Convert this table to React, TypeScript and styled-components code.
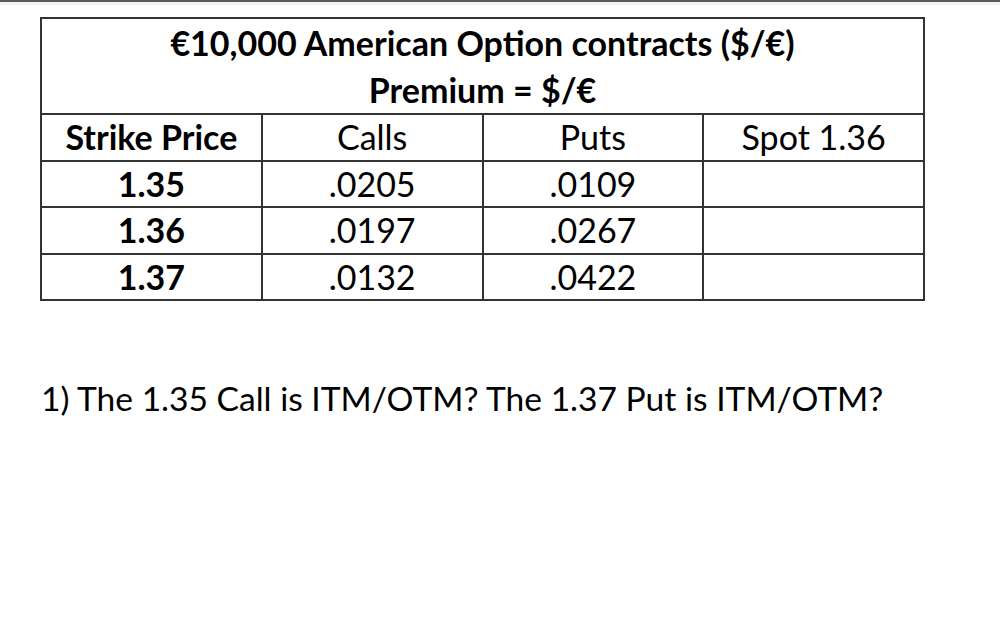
import React from "react";
import styled, { createGlobalStyle } from "styled-components";

const GlobalStyle = createGlobalStyle`
  html, body {
    margin: 0;
    padding: 0;
    background: #ffffff;
  }
  body {
    font-family: Lato, "Open Sans", sans-serif;
    color: #000000;
  }
`;

interface Row {
  strike: string;
  call: string;
  put: string;
}

const rows: Row[] = [
  { strike: "1.35", call: ".0205", put: ".0109" },
  { strike: "1.36", call: ".0197", put: ".0267" },
  { strike: "1.37", call: ".0132", put: ".0422" }
];

export default function App() {
  return (
    <>
      <GlobalStyle />
      <TopEdge />
      <Page>
        <Table>
          <tbody>
            <TitleRow>
              <TitleCell colSpan={4}>
                €10,000 American Option contracts ($/€)
                <br />
                Premium = $/€
              </TitleCell>
            </TitleRow>
            <DataRow>
              <Cell bold>Strike Price</Cell>
              <Cell>Calls</Cell>
              <Cell>Puts</Cell>
              <Cell>Spot 1.36</Cell>
            </DataRow>
            {rows.map((r) => (
              <DataRow key={r.strike}>
                <Cell bold>{r.strike}</Cell>
                <Cell>{r.call}</Cell>
                <Cell>{r.put}</Cell>
                <Cell />
              </DataRow>
            ))}
          </tbody>
        </Table>
        <Question>1) The 1.35 Call is ITM/OTM? The 1.37 Put is ITM/OTM?</Question>
      </Page>
    </>
  );
}

const TopEdge = styled.div`
  height: 2px;
  background: #5c5c5c;
  border-bottom: 3px solid #f2f2f2;
`;

const Page = styled.div`
  padding: 12px 0 0 40px;
`;

const Table = styled.table`
  border-collapse: collapse;
  table-layout: fixed;
  width: 885px;
  border: 2px solid #333333;

  td {
    border: 2px solid #333333;
    padding: 0;
    text-align: center;
    vertical-align: middle;
  }
`;

const TitleRow = styled.tr`
  height: 96px;
`;

const TitleCell = styled.td`
  font-size: 34px;
  font-weight: 700;
  line-height: 47px;
`;

const DataRow = styled.tr`
  height: 46.6px;
`;

const Cell = styled.td<{ bold?: boolean }>`
  width: 25%;
  font-size: 34px;
  line-height: 44px;
  font-weight: ${(p) => (p.bold ? 700 : 400)};
`;

const Question = styled.div`
  margin-top: 75px;
  margin-left: 1px;
  font-size: 33.6px;
  line-height: 44px;
`;
